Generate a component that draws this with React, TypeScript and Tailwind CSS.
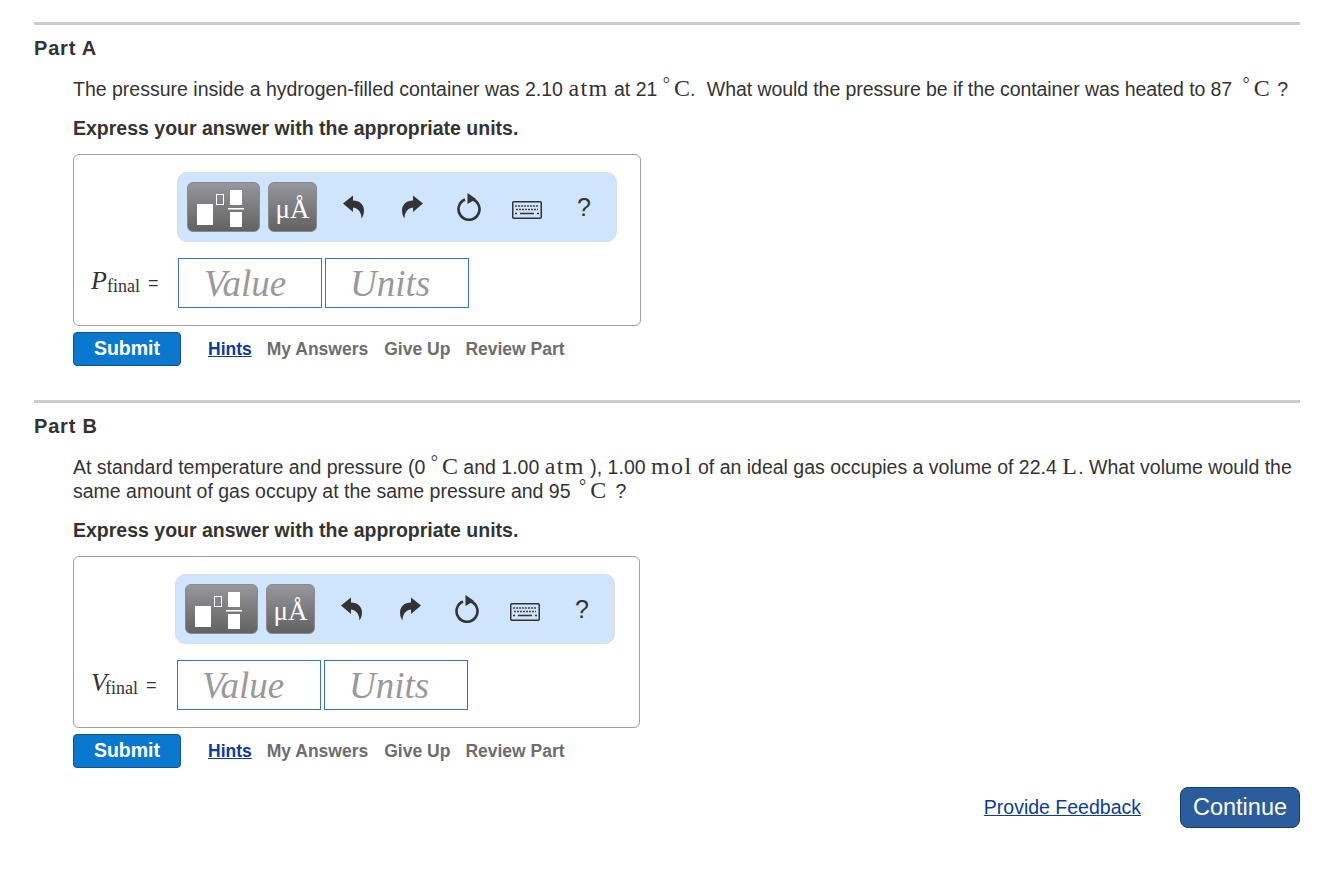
import type { ReactNode } from "react"

const sans = "font-['Liberation_Sans',Arial,sans-serif]"

function Rm({ children }: { children: ReactNode }) {
    return <span className="font-['Liberation_Serif',serif] text-[24px] leading-[14px] tracking-[1.4px]">{children}</span>
}

function Deg({ className = "" }: { className?: string }) {
    return (
        <span className={`font-['Liberation_Serif',serif] text-[24px] leading-[14px] ${className}`}>
            <span className="relative top-[-6px] mr-[4px] text-[18px] leading-none">°</span>
            C
        </span>
    )
}

function TemplateGlyph() {
    return (
        <svg width="47" height="37" viewBox="0 0 47 37" fill="none" className="mr-[6px] mt-[3px]">
            <rect x="0" y="14" width="16" height="21" fill="#fff" />
            <rect x="19.5" y="4.5" width="7" height="10" stroke="#fff" strokeWidth="1" />
            <rect x="33" y="0" width="12" height="15" fill="#fff" />
            <rect x="31" y="18" width="16" height="1.5" fill="#fff" />
            <rect x="33" y="22" width="12" height="15" fill="#fff" />
        </svg>
    )
}

function UndoIcon({ flip = false }: { flip?: boolean }) {
    return (
        <svg width="21" height="24" viewBox="0 0 21 24" className={flip ? "-scale-x-100" : ""}>
            <path d="M0 8.5 L10 0.5 V5.5 C16.5 5.5 21 9.5 21 15.5 C21 18.5 20 21.5 18.5 23.5 C18.5 18.5 16 13 10 12.5 V17 Z" fill="#333" />
        </svg>
    )
}

function ResetIcon() {
    return (
        <svg width="26" height="28" viewBox="0 0 26 28" fill="none">
            <path d="M9 6.5 A10.5 10.5 0 1 0 17 6.5" stroke="#333" strokeWidth="2.6" />
            <path d="M11.5 0 L20 6 L11.5 11 Z" fill="#333" />
        </svg>
    )
}

function KeyboardIcon() {
    return (
        <svg width="30" height="18" viewBox="0 0 30 18" fill="none">
            <rect x="0.75" y="0.75" width="28.5" height="16.5" rx="1" stroke="#333" strokeWidth="1.5" />
            <path d="M3 5 H27" stroke="#444" strokeWidth="1.5" strokeDasharray="2 1" />
            <path d="M4 8.5 H26" stroke="#444" strokeWidth="1.5" strokeDasharray="2 1" />
            <path d="M3 12.5 H5 M8 12.5 H22 M25 12.5 H27" stroke="#333" strokeWidth="1.5" />
        </svg>
    )
}

function Toolbar() {
    return (
        <div className="flex h-[70px] w-[440px] items-center rounded-[10px] border border-[#dcdee0] bg-[#cfe4fd] pl-[9px]">
            <div className="flex h-[50px] w-[73px] items-center justify-center rounded-[6px] border border-[#8a8a8e] bg-gradient-to-b from-[#98979d] to-[#626262]">
                <TemplateGlyph />
            </div>
            <div className="ml-[8px] flex h-[50px] w-[49px] items-center justify-center rounded-[6px] border border-[#8a8a8e] bg-gradient-to-b from-[#98979d] to-[#626262] pt-[5px] font-['Liberation_Serif',serif] text-[27px] leading-none text-white">
                μÅ
            </div>
            <div className="ml-[26px] flex w-[21px] justify-center"><UndoIcon /></div>
            <div className="ml-[38px] flex w-[21px] justify-center"><UndoIcon flip /></div>
            <div className="ml-[33px] flex w-[26px] justify-center"><ResetIcon /></div>
            <div className="ml-[30px] mt-[6px] flex w-[30px] justify-center"><KeyboardIcon /></div>
            <div className={`${sans} ml-[35px] text-[25px] leading-none text-[#333]`}>?</div>
        </div>
    )
}

function AnswerInput({ placeholder, inset }: { placeholder: string; inset: string }) {
    return (
        <div className={`flex h-[50px] w-[144px] items-center border border-[#3a6fd8] ${inset} font-['Liberation_Serif',serif] text-[37px] italic leading-none text-[#999]`}>
            {placeholder}
        </div>
    )
}

function AnswerBox({ symbol, shift }: { symbol: string; shift: boolean }) {
    return (
        <div className={`${shift ? "w-[567px]" : "w-[568px]"} h-[172px] rounded-[6px] border border-[#a0a0a0] pt-[17px]`}>
            <div className={shift ? "ml-[101px]" : "ml-[103px]"}>
                <Toolbar />
            </div>
            <div className="mt-[16px] flex items-center pl-[17px]">
                <div className={`flex ${shift ? "w-[86px]" : "w-[87px]"} items-baseline pb-[4px] font-['Liberation_Serif',serif] text-[#333]`}>
                    <span className="text-[26px] italic leading-none">{symbol}</span>
                    <span className={`relative top-[3px] text-[18px] leading-none ${shift ? "-ml-[2px]" : ""}`}>final</span>
                    <span className={`${sans} ml-[8px] text-[18px] leading-none`}>=</span>
                </div>
                <AnswerInput placeholder="Value" inset={shift ? "pl-[24px]" : "pl-[25px]"} />
                <div className="ml-[3px]">
                    <AnswerInput placeholder="Units" inset="pl-[24px]" />
                </div>
            </div>
        </div>
    )
}

function ActionRow() {
    return (
        <div className={`${sans} mt-[6px] flex items-center text-[17.5px] font-bold text-[#6d6d6d]`}>
            <button className="h-[34px] w-[108px] rounded-[4px] border border-[#0b5595] bg-[#0b78cf] text-[19.5px] font-bold text-white">
                Submit
            </button>
            <a className="ml-[27px] text-[#0c3ba0] underline">Hints</a>
            <span className="ml-[15px]">My Answers</span>
            <span className="ml-[16px]">Give Up</span>
            <span className="ml-[15px]">Review Part</span>
        </div>
    )
}

function Part({ title, symbol, shift = false, children }: { title: string; symbol: string; shift?: boolean; children: ReactNode }) {
    return (
        <section className="border-t-[3px] border-[#cccccc]">
            <h2 className="mt-[10px] text-[20px] font-bold leading-[26px] tracking-[0.8px] text-[#333]">{title}</h2>
            <div className="pl-[39px]">
                <p className="mt-[16px] text-[19.5px] leading-[24px] text-[#333]">{children}</p>
                <p className="mt-[15px] text-[19.5px] font-bold leading-[24px] text-[#333]">Express your answer with the appropriate units.</p>
                <div className="mt-[14px]">
                    <AnswerBox symbol={symbol} shift={shift} />
                </div>
                <ActionRow />
            </div>
        </section>
    )
}

export default function App() {
    return (
        <div className={`${sans} h-[877px] w-[1324px] overflow-hidden bg-white pl-[34px] pr-[24px] pt-[22px]`}>
            <Part title="Part A" symbol="P">
                The pressure inside a hydrogen-filled container was 2.10 <Rm>atm</Rm> at 21 <Deg />.{" "}
                <span className="ml-[6px] tracking-[-0.08px]">What would the pressure be if the container was heated to 87</span>{" "}
                <Deg className="ml-[5px] mr-[2px]" /> ?
            </Part>
            <div className="mt-[34px]">
                <Part title="Part B" symbol="V" shift>
                    At standard temperature and pressure (0 <Deg /> and 1.00 <Rm>atm</Rm> ), 1.00 <Rm>mol</Rm> of an ideal gas occupies a volume of 22.4 <Rm>L</Rm>. What volume would the same amount of gas occupy at the same pressure and 95 <Deg className="ml-[3px] mr-[4px]" /> ?
                </Part>
            </div>
            <div className="mt-[19px] flex items-center justify-end">
                <a className="text-[19.5px] text-[#0c3ba0] underline">Provide Feedback</a>
                <button className="ml-[39px] h-[41px] w-[120px] rounded-[8px] border border-[#123f70] bg-[#2b5c9b] text-[23.5px] text-white">
                    Continue
                </button>
            </div>
        </div>
    )
}
